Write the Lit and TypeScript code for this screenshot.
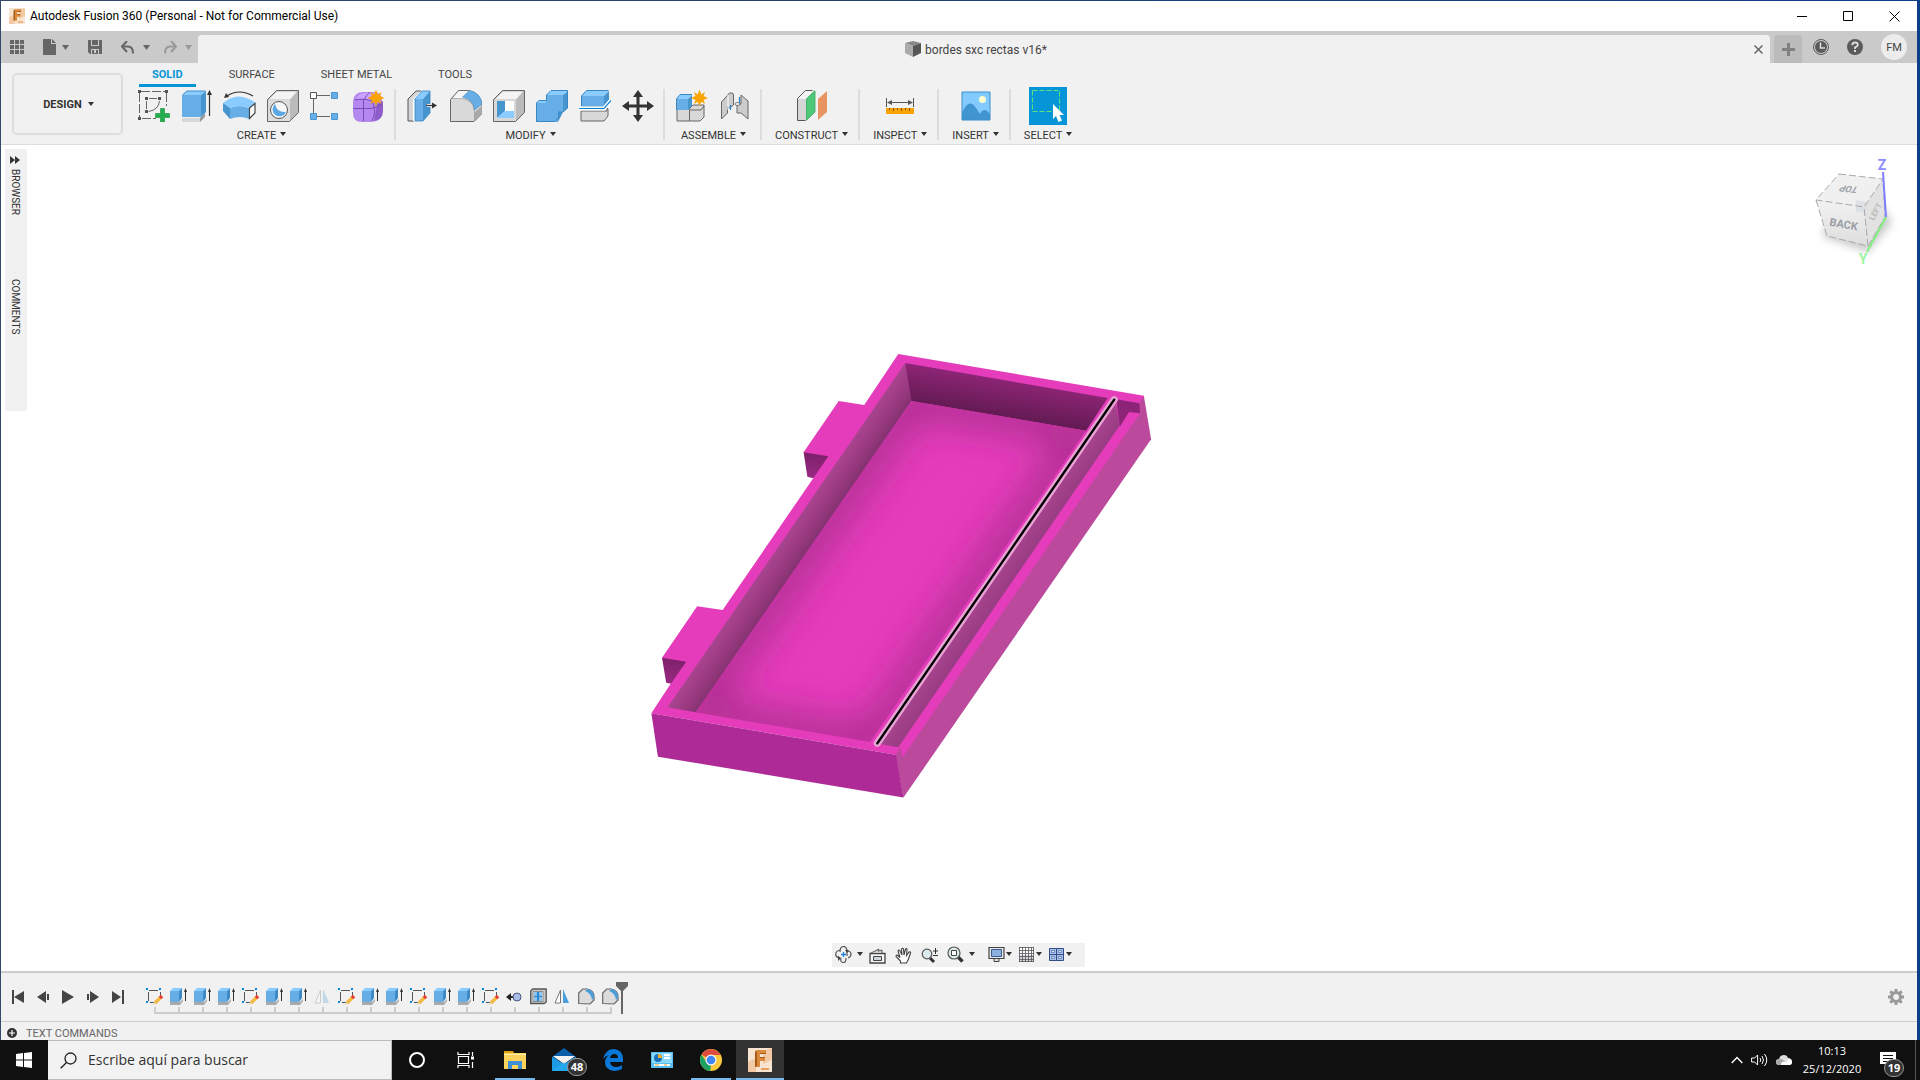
import { LitElement, html, css, svg, TemplateResult } from "lit";
import { customElement } from "lit/decorators.js";

const icon = (w: number, h: number, body: unknown) =>
  html`<svg width=${w} height=${h} viewBox="0 0 ${w} ${h}" aria-hidden="true">${body}</svg>`;

const caret = () => icon(6, 4, svg`<path d="M0 0h6L3 4z" fill="currentColor"/>`);
const bigCaret = () => icon(7, 5, svg`<path d="M0 0h7L3.500 5z" fill="currentColor"/>`);

/* ---------- quick access ---------- */
const qa = {
  grid: icon(14, 14, svg`<path fill="#666" d="M0 0h4v4H0zM5 0h4v4H5zM10 0h4v4h-4zM0 5h4v4H0zM5 5h4v4H5zM10 5h4v4h-4zM0 10h4v4H0zM5 10h4v4H5zM10 10h4v4h-4z"/>`),
  file: icon(13, 16, svg`<path fill="#666" d="M0 0h8v5h5v11H0z"/><path fill="#666" d="M9 0l4 4H9z"/>`),
  save: icon(14, 14, svg`<path fill="#666" d="M0 0h14v14H2l-2-2z"/><path fill="#cacaca" d="M3 0h1v5h6V0h1v6H3zM3 9h8v5h-1v-4H8v3H6v-3H4v4H3z"/>`),
  undo: icon(14, 13, svg`<path d="M2 5.500h5q5 0 5 7" fill="none" stroke="#666" stroke-width="2"/><path d="M6 0L1 5.500L6 11" fill="none" stroke="#666" stroke-width="2"/>`),
  redo: icon(14, 13, svg`<path d="M12 5.500H7q-5 0-5 7" fill="none" stroke="#999" stroke-width="2"/><path d="M8 0l5 5.500L8 11" fill="none" stroke="#999" stroke-width="2"/>`),
};

const star = (x: number, y: number) =>
  svg`<path transform="translate(${x} ${y})" fill="#f9a400" d="M0-8.500L1.800-3.600L5.600-6L4-2L8.500 0L4 2L5.600 6L1.800 3.800L0 8L-1.800 3.800L-5.600 6L-4 2L-8.500 0L-4-2L-5.600-6L-1.800-3.600z"/>`;

/* ---------- ribbon tools ---------- */
const t = {
  sketch: icon(32, 32, svg`<g fill="none" stroke="#666"><path d="M3 1.500h24" stroke-dasharray="9 2"/><path d="M1.500 3v24M28.500 3v13" stroke-dasharray="9 2"/><path d="M4 28.500h14" stroke-dasharray="9 2"/><path d="M11 8.500h8M8.500 11v8M21.500 11q-1 9-11 10.500"/></g><path fill="#555" d="M0 0h3v3H0zM27 0h3v3h-3zM0 27h3v3H0zM7 7h3v3H7zM20 7h3v3h-3zM7 20h3v3H7z"/><path fill="#23ae4d" stroke="#15903b" stroke-width=".6" d="M22.500 18.500h4v5h5v4h-5v4.500h-4v-4.500h-5v-4h5z"/>`),
  extrude: icon(32, 32, svg`<path fill="#d8d8d8" d="M1 28h18v4H1z"/><path fill="#999" d="M19 28l5-5v4l-5 5z"/><path fill="#67aee6" d="M1 5h19v22H1z"/><path fill="#8accff" d="M1 5l5-4h19l-5 4z"/><path fill="#4795cf" d="M20 5l5-4v21l-5 5z"/><path d="M1.500 5L6 1h18.500" stroke="#3e8fc8" fill="none"/><path d="M28.500 26V3" stroke="#333" stroke-width="1.200"/><path fill="#333" d="M28.500 0l2.500 5h-5z"/>`),
  revolve: icon(34, 32, svg`<path d="M4 6q12-8 26 0" fill="none" stroke="#333" stroke-width="1.200"/><path fill="#333" d="M1 8l2-5 3 4z"/><path fill="#67aee6" d="M7 18q9-4 19 0v11q-9-4-19 0z"/><path fill="#8accff" d="M0 13q15-13 33 0l-7 5q-9-4-19 0z"/><path fill="#4795cf" d="M0 13l7 5v11L0 21z"/><path d="M26.500 18l5.500-4.500V23l-5.500 5.500z" fill="#fff" stroke="#444" stroke-width="1.200"/>`),
  hole: icon(32, 32, svg`<path d="M.5 9.500l9-9h22v22l-9 9H.5z" fill="#bbb" stroke="#666"/><path d="M1 10h22v21H1z" fill="#ddd"/><path d="M2 9.500l8-8h20l-7 8z" fill="#f4f4f4"/><circle cx="12" cy="20" r="8.500" fill="#f6f6f6" stroke="#555"/><path d="M8 14a7 7 0 1 0 11 8q-9 1-11-8z" fill="#5aa7e3"/>`),
  pattern: icon(32, 32, svg`<g transform="translate(-1 1)"><path d="M8 4.500h13M4.500 8v14M8 25.500h13" stroke="#666" fill="none"/><path d="M1.500 1.500h6v6h-6z" fill="#fff" stroke="#555"/><path d="M22.500 1.500h6v6h-6zM1.500 22.500h6v6h-6zM22.500 22.500h6v6h-6z" fill="#67aee6" stroke="#4a97d4"/></g>`),
  form: icon(32, 32, svg`<path fill="#b488ee" d="M0 11q1-9 10-9h10q9 0 9 9v10q0 11-12 11H9q-9 0-9-9z"/><path fill="#caa2ff" d="M3 9q2-6 9-6h11l-5 7q-8-2-15-1z"/><path fill="#8f5dc8" d="M24 14l6-3v10q0 9-9 10z"/><path d="M0 18.500h18q7-1 11-5M10.500 10v21M2 10q10-2 17 1 5 10 0 20M11 10q2-5 6-8" stroke="#7a4ab8" fill="none"/>${star(23, 8)}`),
  press: icon(32, 32, svg`<path d="M1 31V9l8-8h5v23l-7 7z" fill="#d6d6d6" stroke="#555"/><path fill="#fff" d="M6 9l8-8h3L9 9v22H6z"/><path fill="#67aee6" d="M8 9h8v22H8z"/><path fill="#8accff" d="M8 9l7-8h8l-7 8z"/><path fill="#4795cf" d="M16 9l7-8v22l-7 8z"/><path d="M8 9l7-8h8v22l-7 8H8z" stroke="#3787c2" stroke-width=".8" fill="none"/><path d="M20 15.500h8" stroke="#fff" stroke-width="3"/><path d="M19.500 15.500H27" stroke="#333" stroke-width="1.300"/><path fill="#333" d="M30 15.500l-5-3v6z"/>`),
  fillet: icon(32, 32, svg`<path d="M.5 31.500v-22l8-9h10q12 2 13.500 15v8l-8 8z" fill="#d9d9d9" stroke="#666"/><path d="M2 9l7-8h9l-6 8z" fill="#f6f6f6"/><path d="M25 22l6.500-6v7l-7 8z" fill="#aaa"/><path d="M12.500 7l7-6.500Q31 3 32 14l-7.500 6Q23 9 12.500 7z" fill="#67aee6" stroke="#3e8fc8" stroke-width=".6"/><path d="M2 8.500h9q13 1 13.500 13v9.500" stroke="#888" fill="none" stroke-width=".6"/>`),
  shell: icon(32, 32, svg`<path d="M.5 9.500l9-9h22v22l-9 9H.5z" fill="#bbb" stroke="#666"/><path d="M1 10h22v21H1z" fill="#d8d8d8"/><path d="M2 9.500l8-8h20l-7 8z" fill="#f4f4f4"/><path fill="#fff" d="M4 11h17v17H4z"/><path fill="#4795cf" d="M4 11h8v10l-8 7z"/><path fill="#fff" d="M12 11h9v10h-9z"/><path fill="#8accff" d="M4 28l8-7h9v7z"/>`),
  combine: icon(32, 32, svg`<path fill="#67aee6" d="M0 13h10V5h17v17h-5v10H0z"/><path fill="#8accff" d="M0 13l3-3h7v3zM10 5l5-4h17l-5 4z"/><path fill="#4795cf" d="M27 5l5-4v17l-5 4zM22 22h5l-5 10z"/><path d="M.5 20V13L3 10.500h7.500V5L15 .500h16.500V18L27 22h-4.500v5.500l-4 4H.5z" fill="none" stroke="#3787c2"/>`),
  split: icon(32, 32, svg`<path d="M2 31V21h26v-3l1 1v7l-4 5z" fill="#d8d8d8" stroke="#666"/><path fill="#67aee6" d="M2 6h23v11H2z"/><path fill="#8accff" d="M2 6l5-5h23l-5 5z"/><path fill="#4795cf" d="M25 6l5-5v9l-5 6z"/><path d="M2.500 16V6l5-5.500h22" stroke="#3787c2" fill="none"/><path d="M0 18.500h25l7-8" stroke="#fff" stroke-width="4" fill="none"/><path d="M0 18.500h25l7-8" stroke="#0b84d8" fill="none" stroke-width="1.200"/>`),
  move: icon(32, 32, svg`<path fill="#333" d="M16 0l5 7h-3.500v7.500H25V11l7 5-7 5v-3.500h-7.500V25H21l-5 7-5-7h3.500v-7.500H7V21l-7-5 7-5v3.500h7.500V7H11z"/>`),
  component: icon(32, 32, svg`<path d="M1 31V19h13v-1l3-3h11v12l-4 4z" fill="#d8d8d8" stroke="#666"/><path d="M13.500 20v11M14 20h11l3-4" stroke="#666" fill="none"/><path fill="#67aee6" d="M0 9h12v11H0z"/><path fill="#8accff" d="M0 9l4-4h12l-4 4z"/><path fill="#4795cf" d="M12 9l4-4v11l-4 4z"/><path d="M.5 20V9L4 4.500h12" stroke="#3787c2" fill="none"/>${star(23.5, 8)}`),
  joint: icon(32, 32, svg`<path d="M2.500 29V12l8-9q4-1 4 2v10l-4 3-2-1v6z" fill="#ccc" stroke="#666"/><path d="M18 15l4-1V5l7 6v18l-7-6h-4z" fill="#ccc" stroke="#666"/><path d="M9 5v15" stroke="#fff"/><path d="M11.500 15v5M20.500 7v6" stroke="#2a87d0" stroke-width="1.300"/><ellipse cx="18.500" cy="14" rx="2.500" ry="1.500" fill="#eee" stroke="#666" stroke-width=".8"/>`),
  plane: icon(32, 32, svg`<path d="M9.500 30.500h-8V8.500l8-8h7" fill="#f3f3f3" stroke="#555"/><path fill="#d6d6d6" d="M2 9h8v21H2z"/><path fill="#4fc878" d="M10 9l9-9v22l-9 9z"/><path d="M10.500 9L19 1v21l-8.500 8z" fill="none" stroke="#3aa860" stroke-width=".8"/><path fill="#e99561" d="M22 9l9-8v21l-9 8z"/>`),
  measure: icon(32, 32, svg`<path d="M2.500 8v9M29.500 8v9M4 12.500h24" stroke="#555" fill="none"/><path fill="#555" d="M3 12.500l5-2.500v5zM29 12.500l-5-2.500v5z"/><path fill="#f9a400" d="M2 18h28v6H2z"/><path d="M5.500 18v2M9.500 18v3M13.500 18v2M17.500 18v3M21.500 18v2M25.500 18v3" stroke="#7a5200"/>`),
  image: icon(32, 32, svg`<path d="M2 2h28v28H2z" fill="#83caff"/><circle cx="22.500" cy="9.500" r="3.500" fill="#fffcd0"/><path fill="#4094d0" d="M2 23q7-16 14-5l4 6q4-8 10 0v6H2z"/><path d="M2 2h28v28H2z" fill="none" stroke="#3a8fd0"/>`),
  select: icon(38, 38, svg`<path fill="#0696d7" d="M0 0h38v38H0z"/><path d="M3.500 3.500h27v21h-27z" fill="none" stroke="#5fe27c" stroke-dasharray="5 2"/><path fill="#fff" d="M24 17v15l3-3 2.500 6 3.500-1.500L30.500 28H35z"/>`),
};

interface Group { label: string; tools: [string, TemplateResult][]; }
const groups: Group[] = [
  { label: "CREATE", tools: [["Create Sketch", t.sketch], ["Extrude", t.extrude], ["Revolve", t.revolve], ["Hole", t.hole], ["Rectangular Pattern", t.pattern], ["Create Form", t.form]] },
  { label: "MODIFY", tools: [["Press Pull", t.press], ["Fillet", t.fillet], ["Shell", t.shell], ["Combine", t.combine], ["Split Body", t.split], ["Move", t.move]] },
  { label: "ASSEMBLE", tools: [["New Component", t.component], ["Joint", t.joint]] },
  { label: "CONSTRUCT", tools: [["Offset Plane", t.plane]] },
  { label: "INSPECT", tools: [["Measure", t.measure]] },
  { label: "INSERT", tools: [["Insert Image", t.image]] },
  { label: "SELECT", tools: [["Select", t.select]] },
];

/* ---------- timeline features ---------- */
const f = {
  sketch: icon(17, 17, svg`<path d="M3 2.500h9M2.500 4v9M14.500 4v5M4 14.500h4" stroke="#555" fill="none"/><path fill="#0a84d8" d="M0 0h2v2H0zM13 0h2v2h-2zM0 13h2v2H0z"/><path d="M15 9L9 15" stroke="#f5b63e" stroke-width="3.200"/><path d="M16 8l-2 2" stroke="#e8423c" stroke-width="3.200"/><path d="M7 17l1-3 2 2z" fill="#e9d9b0"/>`),
  extrude: icon(17, 17, svg`<path fill="#aaa" d="M0 14h10l3-3v2l-3 4H0z"/><path fill="#67aee6" d="M0 3h9v11H0z"/><path fill="#8accff" d="M0 3l3-3h9L9 3z"/><path fill="#3d8cc8" d="M9 3l3-3v10l-3 4z"/><path d="M15.500 13V3" stroke="#333"/><path fill="#333" d="M15.500 0L17 4h-3z"/>`),
  mirror: icon(17, 17, svg`<path d="M6.500 2v13H1z" fill="#fff" stroke="#777"/><path fill="#4a9fdc" d="M9 1l6 14H9z"/>`),
  move: icon(17, 17, svg`<path fill="#222" d="M0 9l5-4v3h3v2H5v3z"/><circle cx="11" cy="9" r="4" fill="#a9bde6" stroke="#4a5a80"/>`),
  pattern: icon(17, 17, svg`<path d="M.7 15.500V3l2-2h13.500v13l-2 1.500z" fill="#c9c9c9" stroke="#555" stroke-width="1.300"/><path fill="#e8eef4" stroke="#777" stroke-width=".8" d="M3 3.500h10v10H3z"/><path fill="#8cc4f0" d="M4 4h3v3H4zM9 4h3v3H9zM4 10h3v3H4zM9 10h3v3H9z"/><path fill="#2a87d0" d="M7 4h2v9H7zM4 7.500h8v2H4z"/>`),
  fillet: icon(17, 17, svg`<path d="M.7 15.500V5l4-4H9q7 1 7 8v3l-4 4z" fill="#dcdcdc" stroke="#666" stroke-width="1.200"/><path fill="#4a9fdc" d="M7 3l3-2q6 2 6 9l-2 2Q13 5 7 3z"/>`),
};
type F = keyof typeof f;
const features: { kind: F; faded?: boolean }[] = [
  { kind: "sketch" }, { kind: "extrude" }, { kind: "extrude" }, { kind: "extrude" },
  { kind: "sketch" }, { kind: "extrude" }, { kind: "extrude" }, { kind: "mirror", faded: true },
  { kind: "sketch" }, { kind: "extrude" }, { kind: "extrude" }, { kind: "sketch" },
  { kind: "extrude" }, { kind: "extrude" }, { kind: "sketch" }, { kind: "move" },
  { kind: "pattern" }, { kind: "mirror" }, { kind: "fillet" }, { kind: "fillet" },
];

const playback: [string, TemplateResult][] = [
  ["Go to start", icon(13, 14, svg`<path fill="#444" d="M0 0h2v14H0zM12 1v12L2 7z"/>`)],
  ["Step back", icon(13, 14, svg`<path fill="#444" d="M9 1v12L0 7zM10 4h2v6h-2z"/>`)],
  ["Play", icon(13, 14, svg`<path fill="#444" d="M0 0l12 7L0 14z"/>`)],
  ["Step forward", icon(13, 14, svg`<path fill="#444" d="M0 4h2v6H0zM3 1l9 6-9 6z"/>`)],
  ["Go to end", icon(13, 14, svg`<path fill="#444" d="M0 1l9 6-9 6zM10 0h2v14h-2z"/>`)],
];

/* ---------- navigation bar ---------- */
const nav: { label: string; art: TemplateResult; kind: string }[] = [
  { label: "Orbit", kind: "menu wide", art: icon(17, 17, svg`<g fill="none" stroke="#555" stroke-width="1.200"><path d="M6 12q-1 4 2 4.500t3-4.500M5 6q0-5 3-5.500T12 4v6"/><path d="M5 4Q1 5 .7 8t4.300 4M12 5q4 0 4 3t-3 4"/></g><path fill="#444" d="M10 4h4l-2 3zM3 10l3 2-3 3z"/><path d="M8.500 6v5M6 8.500h5" stroke="#1c7fd8" stroke-width="1.300"/>`) },
  { label: "Look At", kind: "plain", art: icon(17, 17, svg`<path d="M1 6.500h15v9.500H1z" fill="#f7f7f7" stroke="#444" stroke-width="1.300"/><path d="M4.500 9.500h8v4h-8z" fill="#ccd4dc" stroke="#444"/><path d="M2 6l8-4-1 2 4-1v3" fill="#ccc" stroke="#555" stroke-width=".9"/>`) },
  { label: "Pan", kind: "plain", art: icon(17, 17, svg`<path d="M5.500 16V14L1 9.500q0-2 2-1l2 2L3 4q1-2 2 0l2 4-.5-6q1-1.500 2 0L9 8l1.500-6q1.500-1 1.500.5L11.500 8.500 14 5q2-.5 1.500 1L13.500 12l-2 4z" fill="#fff" stroke="#444" stroke-width="1.100"/>`) },
  { label: "Zoom", kind: "plain", art: icon(17, 17, svg`<path d="M9 11l4 4" stroke="#333" stroke-width="3"/><circle cx="6" cy="7" r="4.800" fill="#dcebf0" stroke="#555" stroke-width="1.200"/><path d="M14.500 1v6M12 4h5M12 8.500h5" stroke="#333" fill="none"/>`) },
  { label: "Fit", kind: "menu wide gap", art: icon(17, 17, svg`<path d="M11 11l4.500 4.500" stroke="#333" stroke-width="3.400"/><circle cx="7" cy="7" r="6" fill="#dcebe8" stroke="#555" stroke-width="1.200"/><path d="M4.500 4.500h5v5h-5z" fill="#fff" stroke="#444"/>`) },
  { label: "Display Settings", kind: "menu", art: icon(17, 17, svg`<path d="M1 1.500h15v11H1z" fill="#e8e8e8" stroke="#444" stroke-width="1.200"/><path fill="#8eb0e0" stroke="#3a5a92" d="M3.500 3.500h10v7h-10z"/><path d="M6 13v2.500h5V13" fill="#ddd" stroke="#444"/>`) },
  { label: "Grid and Snaps", kind: "menu", art: icon(17, 17, svg`<path fill="#fff" d="M1 1h15v15H1z"/><path fill="#aab" opacity=".5" d="M1 9h15v7H1z"/><path d="M1.500 1v15M4.500 1v15M7.500 1v15M10.500 1v15M13.500 1v15M15.500 1v15M1 1.500h15M1 4.500h15M1 7.500h15M1 10.500h15M1 13.500h15M1 15.500h15" stroke="#555" stroke-width=".8"/>`) },
  { label: "Viewports", kind: "menu", art: icon(17, 17, svg`<path fill="#a9c1ea" stroke="#2f4c86" d="M1.500 2.500h7v6h-7zM8.500 2.500h7v6h-7zM1.500 8.500h7v6h-7zM8.500 8.500h7v6h-7z"/><path fill="#dbe6f8" stroke="#5a78b4" stroke-width=".8" d="M3.500 4.500h3v2h-3zM10.500 4.500h3v2h-3zM3.500 10.500h3v2h-3zM10.500 10.500h3v2h-3z"/>`) },
];

const fusionLogo = (size: number) => html`<svg width=${size} height=${size} viewBox="0 0 24 24" aria-hidden="true">
  <path fill="#f8e4d2" d="M0 0h24v24H0z"/><path fill="#f3c9a5" d="M0 14l8-4v14H0zM15 3l9-3v12l-9 4z"/>
  <path fill="#d98a3d" d="M7 3l2-1h9v4h-6v3h5v4h-5v6H7z"/><path fill="#a55a18" d="M7 3l2 1v14l-2 1zM12 9h5v1h-5zM12 6h6V5h-6z"/>
  <path fill="#e8a05c" d="M13 20h8v2h-8z"/></svg>`;

/* ---------- taskbar ---------- */
const apps: { label: string; art: TemplateResult; open?: boolean; active?: boolean; badge?: string }[] = [
  { label: "Cortana", art: icon(24, 24, svg`<circle cx="12" cy="12" r="7" fill="none" stroke="#fff" stroke-width="2"/>`) },
  { label: "Task View", art: icon(24, 24, svg`<path d="M4.500 8.500h10v7h-10zM4 4v2.500h11V4M4 20v-2.500h11V20M18.500 4v4M18.500 14v6" fill="none" stroke="#fff" stroke-width="1.200"/><path fill="#fff" d="M17 8.500h3v3h-3z"/>`) },
  { label: "File Explorer", open: true, art: icon(24, 24, svg`<path fill="#e0a010" d="M1 3h9l1 2H1z"/><path fill="#fbd35c" d="M1 5h22v16H1z"/><path fill="#fff0a8" d="M1 6h22v1H1z"/><path fill="#3f8fd4" d="M5 21v-8h14v8h-4v-4H9v4z"/>`) },
  { label: "Mail", badge: "48", art: icon(24, 24, svg`<path fill="#0a5ea8" d="M0 9l12-9 12 9v3H0z"/><path fill="#1e9be6" d="M0 9l12 7 12-7v14H0z"/><path fill="#f2f2f2" d="M1 8h22l-11 8z"/><path fill="#28b4f4" d="M0 23l12-9 12 9z" opacity=".5"/>`) },
  { label: "Edge", art: icon(24, 24, svg`<path fill="#0a78d8" fill-rule="evenodd" d="M2 11C4 4 8 1 13 1q9 1 9 10v3H9q1 5 6 5 4 0 6-2v4q-4 2-8 2-9-1-9-9 0-4 4-7-4 1-6 4zM9 10h8q0-4-4-4-3 0-4 4z"/>`) },
  { label: "Control Panel", art: icon(24, 24, svg`<path fill="#58bdf0" d="M1 4h22v16H1z"/><path fill="#8ad8fa" d="M2 5h20v10H2z"/><path fill="#fff" d="M4 16h16v2H4zM14 6h6v2h-6zM14 9h6v2h-6z"/><circle cx="8" cy="10" r="4" fill="#1a70bc"/><path fill="#f5b02a" d="M8 10V6a4 4 0 0 1 4 4z"/><path d="M5 17h4M14 17h3" stroke="#e9a22a"/>`) },
  { label: "Chrome", open: true, art: icon(24, 24, svg`<circle cx="12" cy="12" r="11" fill="#fbc93c"/><path fill="#de4b3e" d="M12 12L2.500 6.500A11 11 0 0 1 21.600 7H12z"/><path fill="#1da160" d="M2.500 6.500L8 15l4 3-1 5A11 11 0 0 1 2.500 6.500z"/><circle cx="12" cy="12" r="5.500" fill="#f4f4f4"/><circle cx="12" cy="12" r="4.300" fill="#4285f4"/>`) },
  { label: "Fusion 360", open: true, active: true, art: fusionLogo(24) },
];

@customElement("app-root")
export class AppRoot extends LitElement {
  static styles = css`
    :host {
      display: grid;
      grid-template-rows: 1fr 40px;
      min-height: 100vh;
      background: linear-gradient(to right, #34486a 0, #24406e 40%, #0c3f88 100%);
      font-family: Roboto, "Liberation Sans", sans-serif;
      font-size: 11px;
      color: #333;
    }
    * { box-sizing: border-box; }
    svg { display: block; flex: none; }
    button {
      display: flex; align-items: center; justify-content: center;
      margin: 0; padding: 0; border: 0; background: none; color: inherit; font: inherit;
    }
    h1, nav, header, footer, main { margin: 0; }

    .window {
      margin: 1px 3px 0 1px; background: #fff;
      display: grid; grid-template-rows: 30px 32px 82px 1fr 50px 19px;
      min-width: 0;
    }
    .title { display: flex; align-items: center; padding-left: 8px; }
    .title h1 { flex: 1; margin-left: 5px; font: 400 12px/16px Roboto, sans-serif; color: #000; }
    .sys { width: 46px; height: 30px; color: #000; }

    .strip { display: flex; background: #cacaca; }
    .quick { width: 197px; display: flex; align-items: center; padding-left: 9px; color: #666; }
    .quick button { gap: 6px; height: 32px; margin-right: 19px; }
    .quick .q-undo, .quick .q-redo { gap: 8px; margin-right: 13px; }
    .q-redo { color: #999; }
    .doc {
      flex: 1; margin-top: 4px; border-radius: 4px 4px 0 0; background: #f1f1f1;
      display: flex; align-items: center; padding-right: 7px;
    }
    .doc-name { flex: 1; display: flex; justify-content: center; align-items: center; gap: 4px; font-size: 12px; line-height: 16px; color: #444; }
    .doc-name span { padding-top: 1px; }
    .close-tab { color: #666; }
    .new-tab { width: 28px; margin: 4px 11px 0 4px; background: #bbb; border-radius: 4px 4px 0 0; }
    .account { display: flex; align-items: center; gap: 18px; padding-right: 10px; }
    .avatar { width: 26px; height: 26px; border-radius: 50%; background: #ececec; color: #444; }

    .ribbon { display: flex; background: #f1f1f1; border-bottom: 1px solid #ddd; }
    .workspace {
      width: 111px; height: 62px; margin: 10px 15px 0 11px; gap: 6px; padding-left: 2px;
      border: 2px solid #ddd; border-radius: 5px; font-weight: 700;
    }
    .tabs { display: flex; gap: 20px; padding-left: 1px; }
    .tab { height: 24px; padding: 2px 13px 0; border-bottom: 3px solid transparent; color: #444; }
    .tab.on { color: #0696d7; border-color: #0696d7; font-weight: 700; }
    .groups { display: flex; }
    .group {
      display: flex; flex-direction: column; align-items: center; padding: 0 9px 0 11px;
      background: linear-gradient(#ddd, #ddd) right 2px / 2px 51px no-repeat;
      border-right: 2px solid transparent; background-origin: border-box;
    }
    .group:first-child { padding-left: 0; }
    .group:last-child { background: none; }
    .group.single { padding: 0 10px 0 13px; }
    .tools { display: flex; align-items: center; gap: 11px; height: 38px; }
    .tools button { width: 32px; height: 32px; }
    .single .tools button { width: 38px; }
    .menu { height: 20px; gap: 4px; }
    .menu svg { margin-bottom: 2px; }

    .view { position: relative; overflow: hidden; background: #fff; min-height: 400px; }
    .rail {
      width: 22px; height: 262px; margin: 4px 0 0 4px; padding: 7px 2px 0 0; background: #f1f1f1;
      display: flex; flex-direction: column; align-items: center; gap: 5px;
    }
    .rail button { writing-mode: vertical-rl; font-size: 10px; line-height: 12px; }
    .rail .comments { margin-top: 59px; }
    .model { position: absolute; left: 639px; top: 195px; }
    .cube { position: absolute; right: 12px; top: 5px; }
    .navbar {
      position: absolute; left: 831px; bottom: 4px; height: 24px; padding: 0 13px 0 3px;
      display: flex; align-items: center; gap: 6px; background: #f1f1f1;
    }
    .navbar button { gap: 1px; }
    .navbar .plain { margin-right: 3px; }
    .navbar .wide { gap: 5px; }
    .navbar .gap { margin-right: 7px; }

    .timeline { display: flex; align-items: flex-start; background: #f1f1f1; border-top: 2px solid #ccc; }
    .play { display: flex; gap: 12px; padding: 17px 21px 0 11px; }
    .track { display: flex; padding: 15px 0 0; list-style: none; margin: 0; }
    .track li { position: relative; width: 24px; height: 26px; }
    .track li::before { content: ""; position: absolute; left: 8px; top: 19px; width: 2px; height: 6px; background: #ccc; }
    .track li::after { content: ""; position: absolute; left: 8px; top: 24px; width: 24px; height: 2px; background: #ccc; }
    .track li:last-child::after { width: 2px; }
    .faded { opacity: .3; }
    .marker { margin: 9px 0 0 -10px; }
    .gear { margin: 16px 13px 0 auto; }
    .commands { display: flex; align-items: center; gap: 9px; padding: 4px 0 0 6px; background: #f1f1f1; border-top: 1px solid #ccc; color: #666; }

    .taskbar { display: flex; background: #101010; color: #fff; font-family: "Open Sans", "Noto Sans", sans-serif; }
    .start { width: 48px; }
    .search { width: 344px; display: flex; align-items: center; gap: 11px; padding-left: 12px; background: #f2f2f2; border: 1px solid #bbb; border-left: 0; }
    .search input { flex: 1; min-width: 0; border: 0; padding: 0; background: none; outline: 0; font: 400 14px/20px "Open Sans", "Noto Sans", sans-serif; }
    .search input::placeholder { color: #333; opacity: 1; }
    .apps { flex: 1; display: flex; gap: 1px; padding-left: 1px; }
    .app { position: relative; width: 48px; height: 40px; }
    .app.open::after { content: ""; position: absolute; left: 4px; right: 4px; bottom: 0; height: 2px; background: #76b9ed; }
    .app.active { background: #333; }
    .app.active::after { left: 0; right: 0; }
    .badge {
      position: absolute; left: 27px; top: 18px; width: 20px; height: 18px; border-radius: 9px;
      border: 1px solid #999; background: #333; color: #fff; font: 700 11px/16px "Open Sans", sans-serif; text-align: center;
    }
    .tray { display: flex; align-items: center; gap: 8px; padding-right: 11px; border-right: 1px solid #555; margin-right: 4px; }
    .clock { width: 64px; font-size: 11px; line-height: 18px; text-align: center; }
    .note { position: relative; width: 32px; height: 40px; }
    .note .badge { left: 12px; top: 19px; }
  `;

  private title() {
    return html`<header class="title">
      ${fusionLogo(16)}
      <h1>Autodesk Fusion 360 (Personal - Not for Commercial Use)</h1>
      <button class="sys" aria-label="Minimize">${icon(11, 11, svg`<path d="M0 5.500h10" stroke="#000"/>`)}</button>
      <button class="sys" aria-label="Maximize">${icon(11, 11, svg`<path d="M.5.500h9v9h-9z" fill="none" stroke="#000"/>`)}</button>
      <button class="sys" aria-label="Close">${icon(11, 11, svg`<path d="M.5.500l10 10M10.500.500l-10 10" stroke="#000"/>`)}</button>
    </header>`;
  }

  private strip() {
    return html`<div class="strip">
      <div class="quick">
        <button aria-label="Data panel">${qa.grid}</button>
        <button aria-label="File">${qa.file}${bigCaret()}</button>
        <button aria-label="Save">${qa.save}</button>
        <button class="q-undo" aria-label="Undo">${qa.undo}${bigCaret()}</button>
        <button class="q-redo" aria-label="Redo">${qa.redo}${bigCaret()}</button>
      </div>
      <div class="doc">
        <div class="doc-name">
          ${icon(16, 16, svg`<path fill="#888" d="M0 2l8-2 8 2-8 3z"/><path fill="#aaa" d="M0 2l8 3v11l-8-4z"/><path fill="#555" d="M16 2L8 5v11l8-4z"/>`)}
          <span>bordes sxc rectas v16*</span>
        </div>
        <button class="close-tab" aria-label="Close tab">${icon(9, 9, svg`<path d="M.5.500l8 8M8.500.500l-8 8" stroke="currentColor" stroke-width="1.500"/>`)}</button>
      </div>
      <button class="new-tab" aria-label="New design">${icon(13, 13, svg`<path fill="#808080" d="M5 0h3v5h5v3H8v5H5V8H0V5h5z"/>`)}</button>
      <div class="account">
        <button aria-label="Job status">${icon(16, 16, svg`<circle cx="8" cy="8" r="7.500" fill="none" stroke="#5a5a5a"/><circle cx="8" cy="8" r="6" fill="#5a5a5a"/><path d="M7.500 3.500V9H12" fill="none" stroke="#ddd" stroke-width="1.500"/>`)}</button>
        <button aria-label="Help">${icon(16, 16, svg`<circle cx="8" cy="8" r="8" fill="#5a5a5a"/><path d="M5.200 6.200Q5.300 3.500 8 3.500t2.800 2.300Q10.800 7.400 8 8.300V10" fill="none" stroke="#ddd" stroke-width="1.800"/><path fill="#ddd" d="M7 11h2v2H7z"/>`)}</button>
        <button class="avatar">FM</button>
      </div>
    </div>`;
  }

  private ribbon() {
    return html`<div class="ribbon">
      <button class="workspace">DESIGN ${caret()}</button>
      <div>
        <nav class="tabs">
          ${["SOLID", "SURFACE", "SHEET METAL", "TOOLS"].map((n, i) => html`<button class="tab ${i === 0 ? "on" : ""}">${n}</button>`)}
        </nav>
        <div class="groups">
          ${groups.map((g) => html`<section class="group ${g.tools.length === 1 ? "single" : ""}">
            <div class="tools">${g.tools.map(([label, art]) => html`<button aria-label=${label}>${art}</button>`)}</div>
            <button class="menu">${g.label}${caret()}</button>
          </section>`)}
        </div>
      </div>
    </div>`;
  }

  private model() {
    return html`<svg class="model" width="540" height="480" viewBox="0 0 540 480" role="img" aria-label="Tray model">
      <defs>
        <linearGradient id="wall" gradientUnits="userSpaceOnUse" x1="430" y1="580" x2="505" y2="630">
          <stop offset="0" stop-color="#a9448f"/><stop offset=".5" stop-color="#98397f"/><stop offset="1" stop-color="#7c2f6b"/>
        </linearGradient>
        <linearGradient id="back" gradientUnits="userSpaceOnUse" x1="1070" y1="115" x2="1050" y2="235">
          <stop offset="0" stop-color="#8f2577"/><stop offset="1" stop-color="#611a51"/>
        </linearGradient>
        <linearGradient id="lug" x1="0" y1="0" x2="0" y2="1">
          <stop offset="0" stop-color="#7c2069"/><stop offset="1" stop-color="#9a2983"/>
        </linearGradient>
        <linearGradient id="slot" gradientUnits="userSpaceOnUse" x1="1000" y1="700" x2="1060" y2="740">
          <stop offset="0" stop-color="#b04896"/><stop offset="1" stop-color="#9b3d84"/>
        </linearGradient>
        <filter id="soft" x="-30%" y="-30%" width="160%" height="160%"><feGaussianBlur stdDeviation="55"/></filter>
        <clipPath id="floor"><path d="M788 183L1295 272L668 1206L162 1117z"/></clipPath>
      </defs>
      <g transform="scale(.3444 .3333)">
        <path fill="#bb4a9d" d="M1463 167L1484 298L765 1373L740 1240L1420 190z"/>
        <path fill="#e43cbb" d="M750 42L1463 167L1450 190L1452 220L762 1253L756 1222L743 1244L33 1120L90 1030L64 953L166 799L240 810L505 412L475 337L577 183L651 195z"/>
        <path fill="url(#lug)" d="M475 337L547 349L503 415L486 410z"/>
        <path fill="url(#lug)" d="M64 953L134 965L90 1031L76 1028z"/>
        <path fill="#ae2a96" d="M33 1120L743 1244L765 1373L52 1250z"/>
        <path fill="url(#wall)" d="M770 69L788 183L162 1117L80 1102z"/>
        <path fill="url(#back)" d="M770 69L1358 174L1295 272L788 183z"/>
        <g clip-path="url(#floor)">
          <path fill="#e43cbb" d="M788 183L1295 272L668 1206L162 1117z"/>
          <path fill="none" stroke="#8f2677" stroke-opacity=".75" stroke-width="80" filter="url(#soft)" d="M788 183L1295 272L668 1206L162 1117z"/>
        </g>
        <path fill="url(#slot)" d="M1380 180L1393 260L1420 216L750 1222L694 1212z"/>
        <path fill="#8d2477" d="M1383 178L1450 190L1452 220L1420 216L1393 260z"/>
        <path stroke="#e7a3d3" stroke-width="21" stroke-linecap="round" d="M1377 179L689 1210"/>
        <path stroke="#000" stroke-width="7" stroke-linecap="round" d="M1377 179L689 1210"/>
      </g>
    </svg>`;
  }

  private cube() {
    return html`<svg class="cube" width="100" height="124" viewBox="1805 150 100 124" role="img" aria-label="View cube">
      <defs><filter id="blur" x="-30%" y="-30%" width="160%" height="160%"><feGaussianBlur stdDeviation="4"/></filter>
      <linearGradient id="cf" x1="0" y1="0" x2="0" y2="1"><stop offset="0" stop-color="#f2f2f2"/><stop offset="1" stop-color="#dedede"/></linearGradient></defs>
      <path fill="#999" opacity=".55" filter="url(#blur)" d="M1822 236L1868 252L1892 222L1880 205L1830 220z"/>
      <path fill="#f0f0f0" d="M1839 174L1883 179L1864 207L1816 200z"/>
      <path fill="url(#cf)" d="M1816 200L1864 207L1868 246L1827 236z"/>
      <path fill="#e2e2e2" d="M1864 207L1883 179L1885 217L1868 246z"/>
      <path fill="#dde1e6" d="M1856 200l10 2v11l-10-1z"/>
      <path d="M1839 174L1883 179L1864 207L1816 200zM1816 200L1827 236L1868 246L1864 207M1868 246L1885 217L1883 179" fill="none" stroke="#aaa" stroke-width="1" stroke-dasharray="7 3"/>
      <g font-family="Roboto, sans-serif" text-anchor="middle" fill="#9a9fa5" font-weight="700">
        <text transform="translate(1843 228) rotate(10)" font-size="11">BACK</text>
        <text transform="translate(1850 186) rotate(187) skewX(-20)" font-size="9">TOP</text>
        <text transform="translate(1878 213) rotate(-62)" font-size="8" fill="#bbb">LEFT</text>
      </g>
      <path d="M1883 172L1886 217" stroke="#8080ff" stroke-width="2"/>
      <path d="M1886 217L1867 252" stroke="#80f080" stroke-width="2"/>
      <text x="1882" y="170" font-family="Roboto, sans-serif" font-size="14" font-weight="700" text-anchor="middle" fill="#8c8cff">Z</text>
      <text x="1863" y="264" font-family="Roboto, sans-serif" font-size="14" font-weight="700" text-anchor="middle" fill="#a0f5a0">Y</text>
    </svg>`;
  }

  render() {
    return html`
      <div class="window">
        ${this.title()} ${this.strip()} ${this.ribbon()}
        <main class="view">
          <aside class="rail">
            ${icon(10, 8, svg`<path fill="#333" d="M0 0l5 4-5 4zM5 0l5 4-5 4z"/>`)}
            <button>BROWSER</button>
            <button class="comments">COMMENTS</button>
          </aside>
          ${this.model()} ${this.cube()}
          <div class="navbar">
            ${nav.map((n) => html`<button class=${n.kind} aria-label=${n.label}>${n.art}${n.kind === "plain" ? "" : caret()}</button>`)}
          </div>
        </main>
        <div class="timeline">
          <div class="play">${playback.map(([l, a]) => html`<button aria-label=${l}>${a}</button>`)}</div>
          <ul class="track">${features.map((x) => html`<li><button class=${x.faded ? "faded" : ""} aria-label=${x.kind}>${f[x.kind]}</button></li>`)}</ul>
          <div class="marker">${icon(12, 32, svg`<path fill="#666" d="M0 0h12v4L7 9v23H5V9L0 4z"/>`)}</div>
          <button class="gear" aria-label="Timeline settings">${icon(16, 16, svg`<circle cx="8" cy="8" r="4.500" fill="none" stroke="#999" stroke-width="3"/><path stroke="#999" stroke-width="3" d="M8 0v3M8 13v3M0 8h3M13 8h3M2.300 2.300l2 2M11.700 11.700l2 2M2.300 13.700l2-2M11.700 4.300l2-2"/>`)}</button>
        </div>
        <div class="commands">
          ${icon(10, 10, svg`<circle cx="5" cy="5" r="5" fill="#333"/><path d="M5 2v6M2 5h6" stroke="#fff" stroke-width="1.200"/>`)}
          <span>TEXT COMMANDS</span>
        </div>
      </div>
      <footer class="taskbar">
        <button class="start" aria-label="Start">${icon(16, 16, svg`<path fill="#fff" d="M0 2l7-1v6.500H0zM8 1l8-1v7.500H8zM0 8.500h7V15l-7-1zM8 8.500h8V16l-8-1z"/>`)}</button>
        <label class="search">
          ${icon(17, 17, svg`<circle cx="10.500" cy="6.500" r="5.500" fill="none" stroke="#222" stroke-width="1.300"/><path d="M6.500 10.500L.7 16.300" stroke="#222" stroke-width="1.400"/>`)}
          <input type="text" placeholder="Escribe aquí para buscar" aria-label="Escribe aquí para buscar" />
        </label>
        <div class="apps">
          ${apps.map((a) => html`<button class="app ${a.open ? "open" : ""} ${a.active ? "active" : ""}" aria-label=${a.label}>${a.art}${a.badge ? html`<span class="badge">${a.badge}</span>` : ""}</button>`)}
        </div>
        <div class="tray">
          <button aria-label="Show hidden icons">${icon(12, 8, svg`<path d="M.7 7L6 1.500L11.300 7" fill="none" stroke="#fff" stroke-width="1.400"/>`)}</button>
          <button aria-label="Volume">${icon(17, 14, svg`<path d="M.6 5h3l3-3v10l-3-3h-3z" fill="none" stroke="#fff"/><path d="M9 5q1.500 2 0 4M11 3q3 4 0 8M13.500 1q4.500 6 0 12" fill="none" stroke="#fff"/>`)}</button>
          <button aria-label="OneDrive">${icon(16, 11, svg`<path fill="#ddd" d="M3 10Q0 10 0 7t3-3q1-4 5-4 3 0 4 3 4 0 4 4 0 3-3 3z"/><path fill="#aaa" d="M3 10Q0 10 0 7t3-3q3-1 5 2l5 4z"/><path fill="#fff" d="M5 10q0-4 5-3l2-3q4 0 4 3t-3 3z"/>`)}</button>
          <div class="clock">10:13<br />25/12/2020</div>
          <button class="note" aria-label="Notifications">${icon(16, 16, svg`<path fill="#fff" d="M0 0h16v12H8l-3 4v-4H0z"/><path d="M3 3.500h10M3 6.500h10M3 9.500h6" stroke="#101010"/>`)}<span class="badge">19</span></button>
        </div>
      </footer>
    `;
  }
}
